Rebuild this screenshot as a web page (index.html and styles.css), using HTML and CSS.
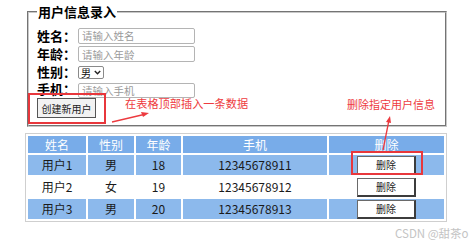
FILE: index.html
```html
<!DOCTYPE html>
<html lang="zh-CN">
<head>
<meta charset="utf-8">
<title>用户信息录入</title>
<link rel="stylesheet" href="styles.css">
</head>
<body>
<div class="page">
  <fieldset class="form">
    <legend class="form-title">用户信息录入</legend>
    <div class="row r1"><label class="lbl">姓名：</label><input class="txt" type="text" placeholder="请输入姓名"></div>
    <div class="row r2"><label class="lbl">年龄：</label><input class="txt" type="text" placeholder="请输入年龄"></div>
    <div class="row r3"><label class="lbl">性别：</label>
      <span class="sel-wrap"><select class="sel"><option>男</option><option>女</option></select>
        <svg class="chev" width="7" height="5" viewBox="0 0 7 5"><path d="M0.8 1 L3.5 3.8 L6.2 1" fill="none" stroke="#222" stroke-width="1.4"/></svg>
      </span>
    </div>
    <div class="row r4"><label class="lbl">手机：</label><input class="txt" type="text" placeholder="请输入手机"></div>
    <button class="create" type="button">创建新用户</button>
  </fieldset>

  <table class="users">
    <thead>
      <tr><th class="c1">姓名</th><th class="c2">性别</th><th class="c3">年龄</th><th class="c4">手机</th><th class="c5">删除</th></tr>
    </thead>
    <tbody>
      <tr class="blue"><td>用户1</td><td>男</td><td>18</td><td>12345678911</td><td><button class="del" type="button">删除</button></td></tr>
      <tr class="white"><td>用户2</td><td>女</td><td>19</td><td>12345678912</td><td><button class="del" type="button">删除</button></td></tr>
      <tr class="blue"><td>用户3</td><td>男</td><td>20</td><td>12345678913</td><td><button class="del" type="button">删除</button></td></tr>
    </tbody>
  </table>
</div>

<svg class="marks" width="474" height="246" viewBox="0 0 474 246">
  <rect x="29" y="94" width="76" height="29" fill="none" stroke="#e8373c" stroke-width="2"/>
  <rect x="352" y="152" width="70" height="22" fill="none" stroke="#e8373c" stroke-width="2"/>
  <line x1="112" y1="122" x2="146" y2="114" stroke="#ec3a3f" stroke-width="1.3"/>
  <path d="M149 113 L141 112 L143 117 Z" fill="#ec3a3f"/>
  <line x1="383" y1="150" x2="389" y2="120" stroke="#ec3a3f" stroke-width="1.3"/>
  <path d="M390 116 L386 122 L391 123 Z" fill="#ec3a3f"/>
</svg>
<div class="note note-insert">在表格顶部插入一条数据</div>
<div class="note note-del">删除指定用户信息</div>
<div class="watermark">CSDN @甜茶o</div>
</body>
</html>
```

FILE: styles.css
```css
html, body {
  margin: 0;
  padding: 0;
  background: #fff;
  width: 474px;
  height: 246px;
  overflow: hidden;
  position: relative;
  font-family: "Noto Sans CJK SC", "Noto Sans", sans-serif;
  color: #111;
}

.page {
  padding: 3px 0 0 25px;
}

.form {
  margin: 0 0 0 2px;
  width: 420px;
  box-sizing: border-box;
  border: 2px groove #c8c8c8;
  padding: 5px 8px 7px 8px;
  min-inline-size: 0;
}

.form-title {
  font-size: 13px;
  line-height: 18px;
  font-weight: bold;
  padding: 0 1px;
  color: #000;
}

.row {
  display: flex;
  align-items: center;
}
.r1 { height: 19px; }
.r2 { height: 18px; }
.r3 { height: 17px; }
.r4 { height: 18px; }

.lbl {
  width: 41px;
  font-size: 13px;
  font-weight: bold;
  line-height: 16px;
  color: #000;
  flex: none;
}

.txt {
  width: 117px;
  height: 16px;
  box-sizing: border-box;
  margin: 0;
  padding: 0 3px;
  border: 1px solid #b4b4b4;
  border-radius: 2px;
  font-family: "Noto Sans CJK SC", sans-serif;
  font-size: 10.5px;
  outline: none;
}
.r4 .txt { height: 15px; margin-top: 2px; }
.txt::placeholder { color: #9a9a9a; }

.sel-wrap {
  position: relative;
  display: flex;
  align-items: center;
  height: 13px;
  margin-top: 1px;
}
.sel {
  appearance: none;
  -webkit-appearance: none;
  display: block;
  width: 26px;
  height: 13px;
  box-sizing: border-box;
  margin: 0;
  padding: 0 0 0 2px;
  border: 1px solid #8a8a8a;
  border-radius: 2px;
  background: #fff;
  font-family: "Noto Sans CJK SC", sans-serif;
  font-size: 10px;
  line-height: 11px;
  color: #111;
}
.chev {
  position: absolute;
  right: 3px;
  top: 4px;
  pointer-events: none;
}

.create {
  display: block;
  width: 59px;
  height: 20px;
  margin: 0;
  padding: 0;
  box-sizing: border-box;
  background: #f2f2f2;
  border: 1px solid #555;
  border-right-width: 1.5px;
  border-bottom-width: 1.5px;
  font-family: "Noto Sans CJK SC", sans-serif;
  font-size: 10px;
  color: #222;
}

.users {
  margin-top: 6px;
  border: 1px solid #cfcfcf;
  border-spacing: 2px;
  table-layout: fixed;
  width: 422px;
  font-size: 12px;
}
.users th, .users td {
  padding: 0;
  text-align: center;
  vertical-align: middle;
}
.users th {
  background: #78ace9;
  color: #fff;
  font-weight: normal;
  height: 17px;
  line-height: 17px;
}
.users td {
  height: 20px;
  line-height: 20px;
  color: #1a1a1a;
}
.c1 { width: 58px; }
.c2 { width: 46px; }
.c3 { width: 45px; }
.c4 { width: 144px; }
.c5 { width: 115px; }
.blue td { background: #8cb9ec; }
.white td { background: #fff; }

.del {
  display: block;
  margin: 0 auto;
  width: 59px;
  height: 19px;
  padding: 0;
  box-sizing: border-box;
  background: #fff;
  border: 1px solid #6a6a6a;
  border-right: 2px solid #3c3c3c;
  border-bottom: 2px solid #3c3c3c;
  font-family: "Noto Sans CJK SC", sans-serif;
  font-size: 10px;
  line-height: 14px;
  color: #222;
}

.marks {
  position: absolute;
  left: 0;
  top: 0;
  pointer-events: none;
}

.note {
  position: absolute;
  color: #ee3b40;
  font-size: 11.2px;
  line-height: 14px;
  white-space: nowrap;
}
.note-insert { left: 125px; top: 96px; }
.note-del { left: 347px; top: 97px; font-size: 11px; }

.watermark {
  position: absolute;
  left: 395px;
  top: 226px;
  font-family: "Noto Sans CJK SC", sans-serif;
  font-size: 11.5px;
  line-height: 15px;
  color: #c4c4c4;
  white-space: nowrap;
}
```
